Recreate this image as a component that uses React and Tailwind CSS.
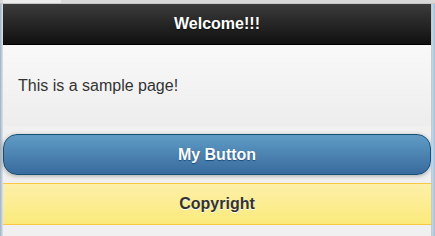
import React from "react";

const App = () => {
  return (
    <div className="w-[435px] h-[236px] flex flex-col bg-[#f0f0f0] overflow-hidden font-['Liberation_Sans',Arial,sans-serif]">
      <div className="h-[4px] bg-[#d9d9d9] flex border-b border-[#c8c8c8]">
        <div className="ml-[3px] w-[58px] h-[3px] bg-[#ececec]" />
      </div>
      <div className="flex flex-1">
        <div className="w-[3px] bg-gradient-to-r from-[#9fb0c2] to-[#dfe5ea]" />
        <div className="w-[428px] flex flex-col">
          <div className="h-[41px] flex items-center justify-center bg-gradient-to-b from-[#3c3c3c] to-[#111111] border-b border-[#000]">
            <h1 className="text-white font-bold text-[16px] [text-shadow:0_1px_1px_#111]">
              Welcome!!!
            </h1>
          </div>
          <div className="h-[81px] flex items-center px-[15px] bg-gradient-to-b from-[#f9f9f9] to-[#ededed]">
            <p className="text-[#333] text-[16px] pt-[1px]">This is a sample page!</p>
          </div>
          <div className="pt-[8px] pb-[8px] bg-[#f0f0f0]">
            <button className="w-full h-[41px] rounded-[14px] border border-[#145072] bg-gradient-to-b from-[#5f9cc5] to-[#396b9e] text-white font-bold text-[16px] [text-shadow:0_1px_1px_#194b7e] shadow-[0_1px_4px_rgba(0,0,0,0.3)]">
              My Button
            </button>
          </div>
          <div className="h-[42px] flex items-center justify-center border-y border-[#f7c942] bg-gradient-to-b from-[#fdf0a8] to-[#fbea7a]">
            <h2 className="text-[#333] font-bold text-[16px] [text-shadow:0_1px_0_#fff]">
              Copyright
            </h2>
          </div>
          <div className="flex-1 bg-[#f0f0f0]" />
        </div>
        <div className="w-[1px] bg-[#c9c9c9]" />
        <div className="w-[3px] bg-gradient-to-r from-[#c5d8ee] to-[#9dbfe4]" />
      </div>
    </div>
  );
};

export default App;
